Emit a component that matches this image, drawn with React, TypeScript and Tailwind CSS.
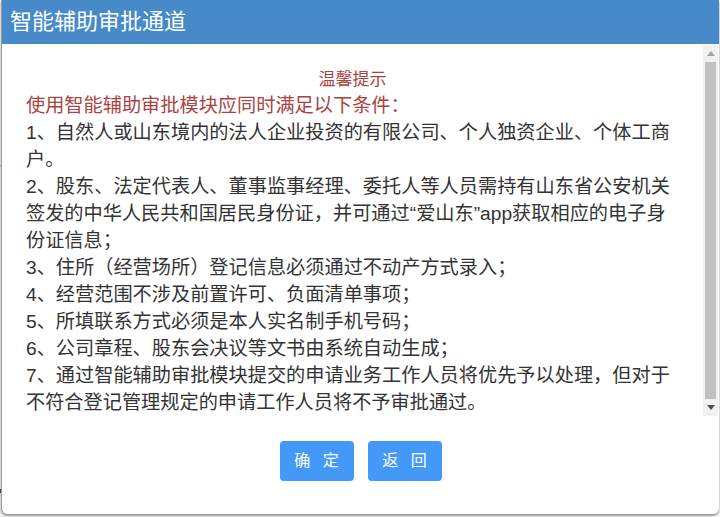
import React from "react";

const font = { fontFamily: '"Liberation Sans", "Noto Sans CJK SC", sans-serif' };

export default function App() {
  const lines = [
    "1、自然人或山东境内的法人企业投资的有限公司、个人独资企业、个体工商户。",
    "2、股东、法定代表人、董事监事经理、委托人等人员需持有山东省公安机关签发的中华人民共和国居民身份证，并可通过“爱山东”app获取相应的电子身份证信息；",
    "3、住所（经营场所）登记信息必须通过不动产方式录入；",
    "4、经营范围不涉及前置许可、负面清单事项；",
    "5、所填联系方式必须是本人实名制手机号码；",
    "6、公司章程、股东会决议等文书由系统自动生成；",
    "7、通过智能辅助审批模块提交的申请业务工作人员将优先予以处理，但对于不符合登记管理规定的申请工作人员将不予审批通过。",
  ];
  return (
    <div className="relative w-[720px] h-[517px] bg-white overflow-hidden" style={font}>
      <div className="absolute left-0 top-[165px] w-[2px] h-px bg-[#bbb]" />
      <div className="absolute left-0 top-[489px] w-[2px] h-[4px] bg-[#1e5aa0]" />
      <div className="relative ml-px w-[718px] h-[514px] flex flex-col bg-white border-l border-[#9a9a9a] rounded-b-[6px] shadow-[0_2px_3px_rgba(0,0,0,0.45)]">
        <div className="h-[44px] bg-[#468ac9] flex items-center pl-[8px] text-white text-[22px] leading-none">
          智能辅助审批通道
        </div>
        <div className="h-px bg-white" />
        <div className="h-[371px] flex">
          <div className="flex-1 overflow-hidden">
            <div className="pl-[24px] w-[677px] pt-[23px] text-[#333] text-[19.2px] leading-[27px]">
              <div className="text-center text-[#a94442] text-[17px] leading-[24px]">温馨提示</div>
              <div className="text-[#a94442]">使用智能辅助审批模块应同时满足以下条件：</div>
              {lines.map((l, i) => (
                <div key={i}>{l}</div>
              ))}
            </div>
          </div>
          <div className="w-[15px] bg-[#f1f1f1] flex flex-col">
            <div className="h-[17px] flex items-center justify-center">
              <svg width="8" height="5" viewBox="0 0 8 5">
                <path d="M0 5 L4 0 L8 5 Z" fill="#a3a3a3" />
              </svg>
            </div>
            <div className="flex-1 px-[2px]">
              <div className="h-full bg-[#c1c1c1]" />
            </div>
            <div className="h-[17px] flex items-center justify-center">
              <svg width="8" height="5" viewBox="0 0 8 5">
                <path d="M0 0 L8 0 L4 5 Z" fill="#505050" />
              </svg>
            </div>
          </div>
          <div className="w-px" />
        </div>
        <div className="flex justify-center gap-[14px] pt-[25px]">
          <button className="w-[74px] h-[40px] rounded-[4px] bg-[#4499f8] text-white text-[16px] tracking-[4px] pl-[4px]">
            确 定
          </button>
          <button className="w-[74px] h-[40px] rounded-[4px] bg-[#4499f8] text-white text-[16px] tracking-[4px] pl-[4px]">
            返 回
          </button>
        </div>
      </div>
    </div>
  );
}
